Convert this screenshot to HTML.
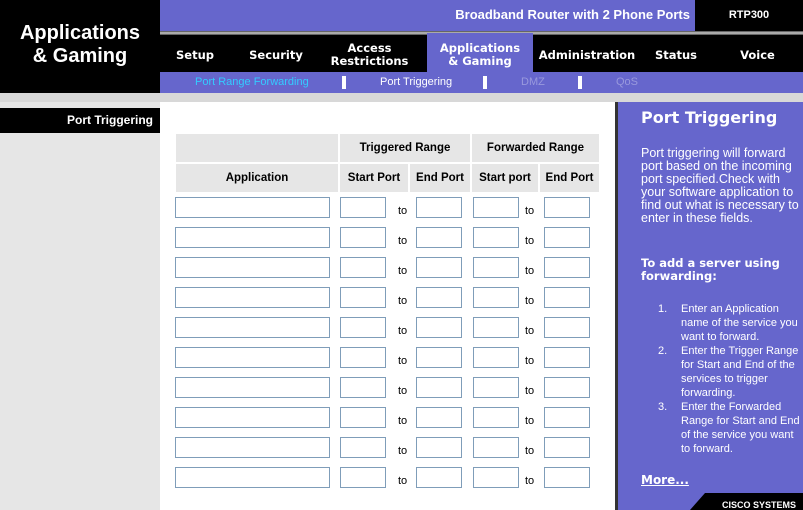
<!DOCTYPE html>
<html><head><style>
*{margin:0;padding:0;box-sizing:border-box}
body{width:803px;height:510px;overflow:hidden;background:#e6e6e6;font-family:"Liberation Sans",sans-serif;position:relative}
.a{position:absolute}
.nav{color:#fff;font-weight:bold;font-size:11.5px;text-align:center;font-family:"DejaVu Sans","Liberation Sans",sans-serif}
.sub{font-size:11px;color:#fff}
.hd{background:#e6e6e6;font-weight:bold;font-size:11.5px;text-align:center;color:#000}
.in{position:absolute;border:1px solid #7f9db9;background:#fff;height:21px}
.to{position:absolute;font-size:11px}
.rp{color:#fff;font-size:12.5px;line-height:13px;font-family:"Liberation Sans",sans-serif}
</style></head><body>
<div class="a" style="left:0;top:0;width:160px;height:94px;background:#000"></div>
<div class="a" style="left:0;top:22px;width:160px;text-align:center;color:#fff;font-weight:bold;font-size:20px;line-height:23px">Applications<br>&amp; Gaming</div>
<div class="a" style="left:160px;top:0;width:535px;height:33px;background:#6666cc"></div>
<div class="a" style="left:160px;top:7px;width:530px;text-align:right;color:#fff;font-weight:bold;font-size:13px">Broadband Router with 2 Phone Ports</div>
<div class="a" style="left:695px;top:0;width:108px;height:33px;background:#000"></div>
<div class="a" style="left:695px;top:9px;width:108px;text-align:center;color:#fff;font-weight:bold;font-size:11px">RTP300</div>
<div class="a" style="left:160px;top:31px;width:643px;height:4px;background:linear-gradient(#444,#ccc,#444)"></div>
<div class="a" style="left:160px;top:35px;width:643px;height:37px;background:#000"></div>
<div class="a" style="left:427px;top:33px;width:106px;height:39px;background:#6666cc"></div>
<div class="a nav" style="left:160px;top:48px;width:70px">Setup</div>
<div class="a nav" style="left:240px;top:48px;width:72px">Security</div>
<div class="a nav" style="left:322px;top:42px;width:95px;line-height:13px">Access<br>Restrictions</div>
<div class="a nav" style="left:427px;top:42px;width:106px;line-height:13px">Applications<br>&amp; Gaming</div>
<div class="a nav" style="left:533px;top:48px;width:108px">Administration</div>
<div class="a nav" style="left:641px;top:48px;width:70px">Status</div>
<div class="a nav" style="left:720px;top:48px;width:75px">Voice</div>
<div class="a" style="left:160px;top:72px;width:643px;height:21px;background:#6666cc"></div>
<div class="a sub" style="left:195px;top:76px;color:#33ccff">Port Range Forwarding</div>
<div class="a" style="left:342px;top:76px;width:4px;height:13px;background:#fff"></div>
<div class="a sub" style="left:380px;top:76px">Port Triggering</div>
<div class="a" style="left:483px;top:76px;width:4px;height:13px;background:#fff"></div>
<div class="a sub" style="left:521px;top:76px;color:#9999dd">DMZ</div>
<div class="a" style="left:578px;top:76px;width:4px;height:13px;background:#fff"></div>
<div class="a sub" style="left:616px;top:76px;color:#9999dd">QoS</div>
<div class="a" style="left:0;top:93px;width:803px;height:9px;background:#d8d8d8"></div>
<div class="a" style="left:0;top:108px;width:160px;height:25px;background:#000"></div>
<div class="a" style="left:0;top:113px;width:153px;text-align:right;color:#fff;font-weight:bold;font-size:12px">Port Triggering</div>
<div class="a" style="left:160px;top:102px;width:455px;height:408px;background:#fff"></div>
<div class="a hd" style="left:176px;top:134px;width:162px;height:28px"></div>
<div class="a hd" style="left:340px;top:134px;width:130px;height:28px;line-height:28px">Triggered Range</div>
<div class="a hd" style="left:472px;top:134px;width:127px;height:28px;line-height:28px">Forwarded Range</div>
<div class="a hd" style="left:176px;top:164px;width:162px;height:28px;line-height:28px">Application</div>
<div class="a hd" style="left:340px;top:164px;width:68px;height:28px;line-height:28px">Start Port</div>
<div class="a hd" style="left:410px;top:164px;width:60px;height:28px;line-height:28px">End Port</div>
<div class="a hd" style="left:472px;top:164px;width:66px;height:28px;line-height:28px">Start port</div>
<div class="a hd" style="left:540px;top:164px;width:59px;height:28px;line-height:28px">End Port</div>
<div id="rows"></div>
<script>
var h='';for(var i=0;i<10;i++){var y=197+30*i;
h+='<div class="in" style="left:175px;top:'+y+'px;width:155px"></div><div class="in" style="left:340px;top:'+y+'px;width:46px"></div><div class="to" style="left:398px;top:'+(y+8)+'px">to</div><div class="in" style="left:416px;top:'+y+'px;width:46px"></div><div class="in" style="left:473px;top:'+y+'px;width:46px"></div><div class="to" style="left:525px;top:'+(y+8)+'px">to</div><div class="in" style="left:544px;top:'+y+'px;width:46px"></div>';}
document.getElementById('rows').innerHTML=h;
</script>
<div class="a" style="left:615px;top:102px;width:188px;height:408px;background:#6666cc;border-left:3px solid #333"></div>
<div class="a" style="left:641px;top:108px;color:#fff;font-weight:bold;font-size:16px;font-family:'DejaVu Sans',sans-serif">Port Triggering</div>
<div class="a rp" style="left:641px;top:147px;width:160px">Port triggering will forward port based on the incoming port specified.Check with your software application to find out what is necessary to enter in these fields.</div>
<div class="a rp" style="left:641px;top:257px;font-weight:bold;width:160px;font-family:'DejaVu Sans',sans-serif;font-size:11.5px">To add a server using forwarding:</div>
<div class="a rp" style="left:658px;top:302px;font-size:11px;width:145px;line-height:14px">
<div style="display:flex"><span style="width:23px">1.</span><span style="width:120px">Enter an Application name of the service you want to forward.</span></div>
<div style="display:flex"><span style="width:23px">2.</span><span style="width:120px">Enter the Trigger Range for Start and End of the services to trigger forwarding.</span></div>
<div style="display:flex"><span style="width:23px">3.</span><span style="width:120px">Enter the Forwarded Range for Start and End of the service you want to forward.</span></div>
</div>
<div class="a rp" style="left:641px;top:474px;font-weight:bold;font-size:12px;text-decoration:underline;font-family:'DejaVu Sans',sans-serif">More...</div>
<div class="a" style="left:690px;top:493px;width:113px;height:17px;background:#000;clip-path:polygon(15px 0,100% 0,100% 100%,0 100%)"></div>
<div class="a" style="left:722px;top:500px;color:#fff;font-size:9px;font-weight:bold">CISCO SYSTEMS</div>
</body></html>
